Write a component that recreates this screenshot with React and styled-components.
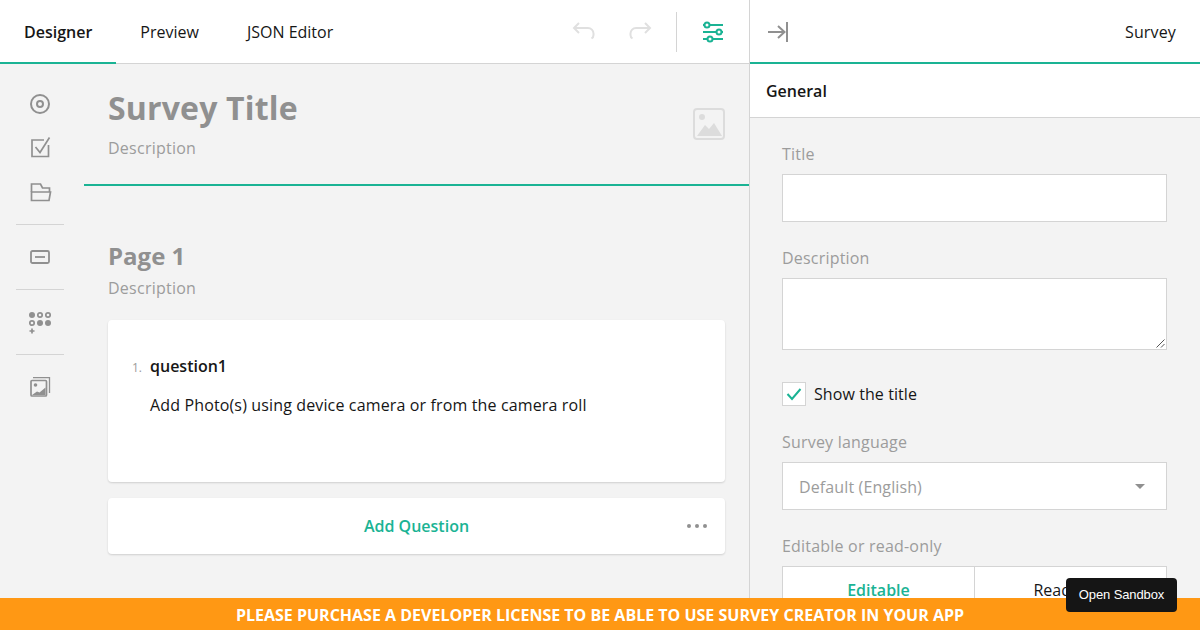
import React from 'react'
import styled, { createGlobalStyle } from 'styled-components'

const teal = '#1ab394'
const line = '#d4d4d4'

const GlobalStyle = createGlobalStyle`
  html, body {
    margin: 0;
    height: 100%;
    overflow: hidden;
    background: #f3f3f3;
    font-family: "Open Sans", "Liberation Sans", sans-serif;
    font-size: 16px;
    color: #161616;
  }
  * {
    box-sizing: border-box;
  }
`

const Icon = ({ children, size = 24, color = '#909090', weight = 2 }) => (
  <svg width={size} height={size} viewBox="0 0 24 24" fill="none" stroke={color} strokeWidth={weight} style={{ display: 'block' }}>
    {children}
  </svg>
)

const tools = [
  [
    <Icon key="radio"><circle cx="12" cy="12" r="9" /><circle cx="12" cy="12" r="3" /></Icon>,
    <Icon key="check" weight={1.7}><path d="M16 4H4v16.500h16.500V9" /><path d="M7.500 11l4.500 5.500L21.500 1.500" /></Icon>,
    <Icon key="folder" weight={1.7}><path d="M3.500 12V4h9l2 4h7v4" /><path d="M3.500 20.500V12h19l-1.500 8.500z" /></Icon>,
  ],
  [<Icon key="input" weight={1.8}><rect x="3" y="6" width="18" height="12" rx="1.500" /><path d="M7 12h10" /></Icon>],
  [
    <Icon key="dots" weight={1.7}>
      <g stroke="none" fill="#909090">
        <circle cx="4" cy="5" r="3" /><circle cx="20" cy="13" r="3" /><circle cx="12" cy="13" r="3" />
      </g>
      <circle cx="12" cy="5" r="2.200" /><circle cx="20" cy="5" r="2.200" /><circle cx="4" cy="13" r="2.200" />
      <path d="M4 18.500v5M1.500 21h5" />
    </Icon>,
  ],
  [
    <Icon key="images" weight={1.7}>
      <path d="M5 2.700h16.500V18" strokeWidth="1.300" />
      <rect x="3" y="5.500" width="15.500" height="15.500" rx="1" />
      <circle cx="7.500" cy="10" r="1.800" fill="#909090" stroke="none" />
      <path d="M4 20l5-3.500 2.500 1 6-5V20z" fill="#909090" stroke="none" />
    </Icon>,
  ],
]

const App = () => (
  <Page>
    <GlobalStyle />
    <Designer>
      <TopBar>
        <Tab $active>Designer</Tab>
        <Tab>Preview</Tab>
        <Tab>JSON Editor</Tab>
        <TopActions>
          <ActionButton>
            <Icon color="#e0e0e0"><path d="M7 3L2 8l5 5" /><path d="M2 8h14a5.500 5.500 0 0 1 5.500 5.500V15a4 4 0 0 1-2 3.500" /></Icon>
          </ActionButton>
          <ActionButton>
            <Icon color="#e0e0e0"><path d="M17 3l5 5-5 5" /><path d="M22 8H8a5.500 5.500 0 0 0-5.500 5.500V15a4 4 0 0 0 2 3.500" /></Icon>
          </ActionButton>
          <ActionDivider />
          <ActionButton>
            <Icon color={teal}>
              <path d="M2 5h1.500M9 5h13M2 12h13M21 12h1M2 19h4M12 19h10" />
              <circle cx="6" cy="5" r="2.500" />
              <circle cx="18" cy="12" r="2.500" />
              <circle cx="9" cy="19" r="2.500" />
            </Icon>
          </ActionButton>
        </TopActions>
      </TopBar>
      <Workspace>
        <Toolbox>
          {tools.map((group, i) => (
            <ToolGroup key={i}>
              {group.map((icon, j) => <Tool key={j}>{icon}</Tool>)}
            </ToolGroup>
          ))}
        </Toolbox>
        <Canvas>
          <SurveyHeader>
            <div>
              <SurveyTitle>Survey Title</SurveyTitle>
              <Description>Description</Description>
            </div>
            <LogoSlot>
              <svg width="32" height="32" viewBox="0 0 32 32" fill="none" style={{ display: 'block' }}>
                <rect x="1" y="1" width="30" height="30" rx="3" stroke="#dcdcdc" strokeWidth="2" />
                <circle cx="9" cy="9" r="3" fill="#dcdcdc" />
                <path d="M4 28l8-11 4 4 5-6 8 13z" fill="#dcdcdc" />
              </svg>
            </LogoSlot>
          </SurveyHeader>
          <PageBlock>
            <PageTitle>Page 1</PageTitle>
            <PageDescription>Description</PageDescription>
            <QuestionCard>
              <QuestionHead>
                <QuestionNumber>1.</QuestionNumber>
                <QuestionName>question1</QuestionName>
              </QuestionHead>
              <QuestionText>Add Photo(s) using device camera or from the camera roll</QuestionText>
            </QuestionCard>
            <AddCard>
              <AddLabel>Add Question</AddLabel>
              <MoreDots><i /><i /><i /></MoreDots>
            </AddCard>
          </PageBlock>
        </Canvas>
      </Workspace>
    </Designer>
    <Sidebar>
      <SidebarTop>
        <Icon>
          <path d="M1 12h17M11 6l6.500 6-6.500 6" />
          <path d="M20 2v20" />
        </Icon>
        <SidebarName>Survey</SidebarName>
      </SidebarTop>
      <SectionTitle>General</SectionTitle>
      <Form>
        <Field>
          <Label>Title</Label>
          <TextBox />
        </Field>
        <Field>
          <Label>Description</Label>
          <TextArea>
            <svg width="9" height="9" viewBox="0 0 9 9" stroke="#555" strokeWidth="1">
              <path d="M0.500 8.500l8-8M5 8.500l3.500-3.500" />
            </svg>
          </TextArea>
        </Field>
        <CheckRow>
          <CheckBox>
            <svg width="16" height="16" viewBox="0 0 16 16" fill="none" stroke={teal} strokeWidth="2" style={{ display: 'block' }}>
              <path d="M1.500 8l4.500 5 8.500-10" />
            </svg>
          </CheckBox>
          Show the title
        </CheckRow>
        <Field>
          <Label>Survey language</Label>
          <Select>
            Default (English)
            <Caret />
          </Select>
        </Field>
        <Field>
          <Label>Editable or read-only</Label>
          <Segments>
            <Segment $active>Editable</Segment>
            <Segment>Read-only</Segment>
          </Segments>
        </Field>
      </Form>
    </Sidebar>
    <LicenseBanner>Please purchase a developer license to be able to use Survey Creator in your app</LicenseBanner>
    <SandboxButton>Open Sandbox</SandboxButton>
  </Page>
)

const Page = styled.div`
  position: relative;
  display: flex;
  width: 1200px;
  height: 630px;
  overflow: hidden;
  background: #f3f3f3;
`

const Designer = styled.div`
  width: 750px;
  flex-shrink: 0;
  border-right: 1px solid ${line};
`

const TopBar = styled.div`
  display: flex;
  height: 64px;
  background: #fff;
  border-bottom: 1px solid ${line};
`

const Tab = styled.div`
  height: 64px;
  padding: 0 24px;
  line-height: 64px;
  font-weight: ${p => (p.$active ? 600 : 400)};
  color: #161616;
  border-bottom: 2px solid ${p => (p.$active ? teal : 'transparent')};
`

const TopActions = styled.div`
  display: flex;
  align-items: center;
  margin-left: auto;
  padding-right: 24px;
`

const ActionButton = styled.div`
  margin-left: 32px;
  &:first-child {
    margin-left: 0;
  }
`

const ActionDivider = styled.div`
  width: 1px;
  height: 40px;
  margin: 0 -8px 0 24px;
  background: ${line};
`

const Workspace = styled.div`
  display: flex;
`

const Toolbox = styled.div`
  width: 84px;
  flex-shrink: 0;
  padding: 18px 20px 0 16px;
`

const ToolGroup = styled.div`
  padding-bottom: 10px;
  margin-bottom: 10px;
  border-bottom: 1px solid ${line};
  &:last-child {
    border-bottom: 0;
  }
`

const Tool = styled.div`
  display: flex;
  align-items: center;
  justify-content: center;
  height: 44px;
`

const Canvas = styled.div`
  flex: 1;
`

const SurveyHeader = styled.div`
  display: flex;
  justify-content: space-between;
  height: 122px;
  padding: 21px 24px 0;
  border-bottom: 2px solid ${teal};
`

const SurveyTitle = styled.div`
  font-size: 32px;
  line-height: 46px;
  font-weight: 700;
  letter-spacing: 0.17px;
  color: #909090;
`

const Description = styled.div`
  margin-top: 5px;
  line-height: 24px;
  letter-spacing: 0.25px;
  color: #9c9c9c;
`

const PageDescription = styled(Description)`
  margin-top: 1px;
`

const LogoSlot = styled.div`
  padding-top: 23px;
`

const PageBlock = styled.div`
  padding: 51px 24px 0;
`

const PageTitle = styled.div`
  font-size: 24px;
  line-height: 38px;
  font-weight: 700;
  color: #909090;
`

const QuestionCard = styled.div`
  height: 162px;
  margin-top: 20px;
  padding: 34px 24px 0;
  background: #fff;
  border-radius: 4px;
  box-shadow: 0 1px 2px rgba(0, 0, 0, 0.15);
`

const QuestionHead = styled.div`
  display: flex;
  align-items: baseline;
  line-height: 24px;
`

const QuestionNumber = styled.span`
  width: 18px;
  font-size: 12px;
  color: #9c9c9c;
`

const QuestionName = styled.span`
  font-weight: 600;
`

const QuestionText = styled.div`
  margin: 13px 0 0 18px;
  line-height: 24px;
  letter-spacing: 0.14px;
`

const AddCard = styled.div`
  position: relative;
  display: flex;
  align-items: center;
  justify-content: center;
  height: 56px;
  margin-top: 16px;
  background: #fff;
  border-radius: 4px;
  box-shadow: 0 1px 2px rgba(0, 0, 0, 0.15);
`

const AddLabel = styled.div`
  font-weight: 600;
  color: ${teal};
`

const MoreDots = styled.div`
  position: absolute;
  right: 18px;
  top: 26px;
  display: flex;
  gap: 4px;
  i {
    width: 4px;
    height: 4px;
    border-radius: 50%;
    background: #909090;
  }
`

const Sidebar = styled.div`
  flex: 1;
  min-width: 0;
`

const SidebarTop = styled.div`
  display: flex;
  align-items: center;
  justify-content: space-between;
  height: 64px;
  padding: 2px 24px 0 17px;
  background: #fff;
  border-bottom: 2px solid ${teal};
`

const SidebarName = styled.div`
  letter-spacing: 0.15px;
  color: #161616;
`

const SectionTitle = styled.div`
  height: 54px;
  padding: 0 16px;
  line-height: 54px;
  font-weight: 600;
  background: #fff;
  border-bottom: 1px solid ${line};
`

const Form = styled.div`
  padding: 24px 33px 0 32px;
`

const Field = styled.div`
  margin-bottom: 24px;
`

const Label = styled.div`
  margin-bottom: 8px;
  line-height: 24px;
  letter-spacing: 0.2px;
  color: #9c9c9c;
`

const TextBox = styled.div`
  height: 48px;
  background: #fff;
  border: 1px solid ${line};
`

const TextArea = styled(TextBox)`
  position: relative;
  height: 72px;
  margin-bottom: 32px;
  svg {
    position: absolute;
    right: 1px;
    bottom: 1px;
  }
`

const CheckRow = styled.div`
  display: flex;
  align-items: center;
  gap: 8px;
  height: 24px;
  margin-bottom: 24px;
  letter-spacing: 0.08px;
`

const CheckBox = styled.div`
  display: flex;
  align-items: center;
  justify-content: center;
  width: 24px;
  height: 24px;
  background: #fff;
  border: 1px solid ${line};
`

const Select = styled(TextBox)`
  display: flex;
  align-items: center;
  justify-content: space-between;
  padding: 2px 21px 0 16px;
  letter-spacing: 0.12px;
  color: #9c9c9c;
`

const Caret = styled.span`
  width: 0;
  height: 0;
  margin-top: -2px;
  border: 5px solid transparent;
  border-top-color: #909090;
  border-bottom-width: 0;
`

const Segments = styled.div`
  display: flex;
  height: 48px;
  background: #fff;
  border: 1px solid ${line};
`

const Segment = styled.div`
  flex: 1;
  text-align: center;
  line-height: 46px;
  font-weight: ${p => (p.$active ? 600 : 400)};
  color: ${p => (p.$active ? teal : '#161616')};
  & + & {
    border-left: 1px solid ${line};
  }
`

const LicenseBanner = styled.div`
  position: absolute;
  left: 0;
  right: 0;
  bottom: 0;
  height: 32px;
  line-height: 34px;
  text-align: center;
  text-transform: uppercase;
  font-weight: 700;
  color: #fff;
  background: #ff9814;
`

const SandboxButton = styled.div`
  position: absolute;
  left: 1066px;
  top: 578px;
  width: 111px;
  height: 34px;
  line-height: 33px;
  text-align: center;
  font-family: "Liberation Sans", Arial, sans-serif;
  font-size: 13px;
  letter-spacing: -0.12px;
  color: #fff;
  background: #151515;
  border-radius: 4px;
`

export default App
